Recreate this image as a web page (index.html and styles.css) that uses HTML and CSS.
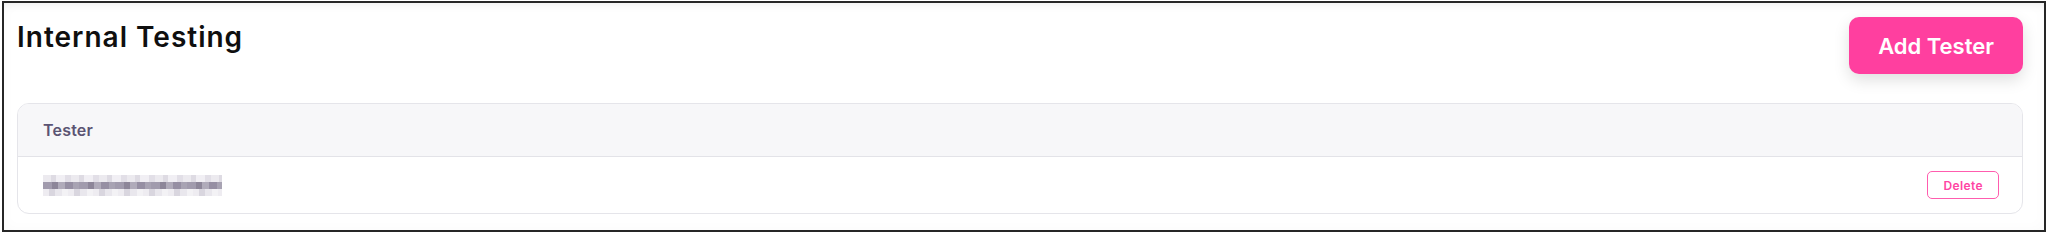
FILE: index.html
```html
<!DOCTYPE html>
<html lang="en">
<head>
  <meta charset="UTF-8" />
  <meta name="viewport" content="width=device-width, initial-scale=1" />
  <title>Internal Testing</title>
  <link rel="stylesheet" href="styles.css">
</head>
<body>
  <div class="frame">
    <div class="page-head">
      <h1>Internal Testing</h1>
      <button class="add-btn" type="button">Add Tester</button>
    </div>

    <div class="card">
      <div class="card-head">Tester</div>
      <div class="card-row">
        <span class="masked" aria-label="hidden email"></span>
        <button class="delete-btn" type="button">Delete</button>
      </div>
    </div>
  </div>
</body>
</html>
```

FILE: styles.css
```css
* {
  box-sizing: border-box;
  font-family: 'Inter', 'Liberation Sans', sans-serif;
}

body {
  margin: 0;
  padding: 0;
  background: #fff;
}

.frame {
  margin: 1px 2px 0;
  height: 231px;
  border: 2px solid #262626;
  padding: 14px 21px 0 13px;
  background: #fff;
  box-shadow: inset 0 10px 10px -8px rgba(0, 0, 0, 0.06), inset 0 0 14px rgba(0, 0, 0, 0.025);
}

.page-head {
  display: flex;
  justify-content: space-between;
  align-items: flex-start;
  margin-bottom: 29px;
}

h1 {
  margin: 3px 0 0;
  font-size: 28px;
  line-height: 34px;
  font-weight: 600;
  color: #0f0f0f;
  letter-spacing: 1px;
}

.add-btn {
  height: 57px;
  padding: 0 29px;
  background: #ff3f9f;
  color: #fff;
  border: none;
  border-radius: 10px;
  font-size: 22px;
  font-weight: 600;
  cursor: pointer;
  box-shadow: 0 6px 16px rgba(0, 0, 0, 0.13);
}

.card {
  border: 1px solid #e5e5ea;
  border-radius: 12px;
  overflow: hidden;
  background: #fff;
}

.card-head {
  height: 53px;
  display: flex;
  align-items: center;
  padding-left: 25px;
  background: #f7f7f9;
  border-bottom: 1px solid #e3e3e8;
  font-size: 16px;
  font-weight: 600;
  color: #5b5473;
  letter-spacing: 0.2px;
}

.card-row {
  height: 56px;
  display: flex;
  justify-content: space-between;
  align-items: center;
  padding: 0 23px 0 25px;
}

/* pixelated e-mail, like the blurred screenshot */
.masked {
  display: block;
  width: 179px;
  height: 21px;
  background:
    repeating-linear-gradient(90deg, #eceaef 0 8px, #dedbe3 8px 13px, #f1eff4 13px 22px, #e2dfe7 22px 28px) 0 0 / 100% 7px no-repeat,
    repeating-linear-gradient(90deg, #a19bad 0 9px, #8d8699 9px 15px, #b0abba 15px 22px, #968fa3 22px 30px, #a8a3b3 30px 36px) 0 7px / 100% 7px no-repeat,
    repeating-linear-gradient(90deg, #eeecf1 0 6px, #d9d6df 6px 12px, #e9e7ed 12px 19px, #f3f2f5 19px 25px) 0 14px / 100% 7px no-repeat;
}

.delete-btn {
  height: 28px;
  padding: 0 15px;
  background: #fff;
  color: #ff45a3;
  border: 1px solid #ff5cae;
  border-radius: 5px;
  font-size: 12px;
  font-weight: 600;
  letter-spacing: 0.4px;
  cursor: pointer;
}
```
